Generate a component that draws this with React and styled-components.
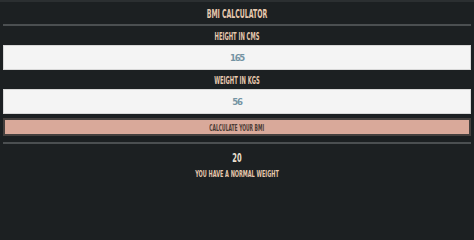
import React, { useState } from 'react'
import styled, { createGlobalStyle, css } from 'styled-components'

const Global = createGlobalStyle`
    html, body {
        margin: 0;
        padding: 0;
        background: #1c2022;
    }
    body {
        font-family: "DejaVu Sans Condensed", "DejaVu Sans", sans-serif;
    }
`

// the reference face is a tall, very narrow display font, so squeeze a condensed one
const narrow = css`
    transform: scaleX(${p => p.squeeze || 0.56});
    transform-origin: center;
`

const Page = styled.div`
    display: flex;
    flex-direction: column;
    align-items: stretch;
    height: 238px;
    background: #1c2022;
    border-top: 2px solid #2b2f31;
    box-sizing: border-box;
    padding: 0 3px;
`

const Title = styled.h1`
    ${narrow}
    margin: 0;
    height: 22px;
    line-height: 23px;
    text-align: center;
    font-size: 12.5px;
    font-weight: bold;
    color: #e6c8ae;
    text-transform: uppercase;
`

const Rule = styled.hr`
    margin: ${p => p.top || 0}px 0 0;
    border: 0;
    height: 2px;
    background: #4b4f51;
`

const Label = styled.label`
    ${narrow}
    display: block;
    height: 19px;
    line-height: 21px;
    text-align: center;
    font-size: 10px;
    font-weight: bold;
    color: #e6c8ae;
    text-transform: uppercase;
`

const Input = styled.input`
    display: block;
    box-sizing: border-box;
    width: 100%;
    height: 25px;
    margin: 0;
    border: 1px solid #d8d8d8;
    background: #f4f4f4;
    text-align: center;
    font-family: inherit;
    font-size: 9.5px;
    font-weight: bold;
    letter-spacing: -1.3px;
    color: #7493a3;
    outline: none;
`

const Button = styled.button`
    display: block;
    box-sizing: border-box;
    width: 100%;
    height: 18px;
    margin: 4px 0 0;
    border: 2px solid #45403e;
    background: #d9a99a;
    padding: 0;
    line-height: 12px;
    cursor: pointer;
`

const ButtonText = styled.span`
    ${narrow}
    display: inline-block;
    font-family: "DejaVu Sans Condensed", "DejaVu Sans", sans-serif;
    font-size: 9.5px;
    font-weight: bold;
    color: #4a3b35;
    text-transform: uppercase;
`

const Score = styled.div`
    ${narrow}
    margin-top: 7px;
    line-height: 14px;
    text-align: center;
    font-size: 12px;
    font-weight: bold;
    color: #ece0d2;
`

const Verdict = styled.div`
    ${narrow}
    margin-top: 3px;
    line-height: 12px;
    text-align: center;
    font-size: 9.5px;
    font-weight: bold;
    color: #e6c8ae;
    text-transform: uppercase;
`

export default function App () {
    const [height, setHeight] = useState('165')
    const [weight, setWeight] = useState('56')
    const bmi = Math.floor(Number(weight) / Math.pow(Number(height) / 100, 2))

    return (
        <Page>
            <Global />
            <Title squeeze={0.55}>BMI Calculator</Title>
            <Rule />
            <Label squeeze={0.58}>Height in cms</Label>
            <Input value={height} onChange={e => setHeight(e.target.value)} />
            <Label squeeze={0.58}>Weight in kgs</Label>
            <Input value={weight} onChange={e => setWeight(e.target.value)} />
            <Button>
                <ButtonText squeeze={0.52}>Calculate your BMI</ButtonText>
            </Button>
            <Rule top={6} />
            <Score squeeze={0.62}>{bmi}</Score>
            <Verdict squeeze={0.58}>You have a normal weight</Verdict>
        </Page>
    )
}
